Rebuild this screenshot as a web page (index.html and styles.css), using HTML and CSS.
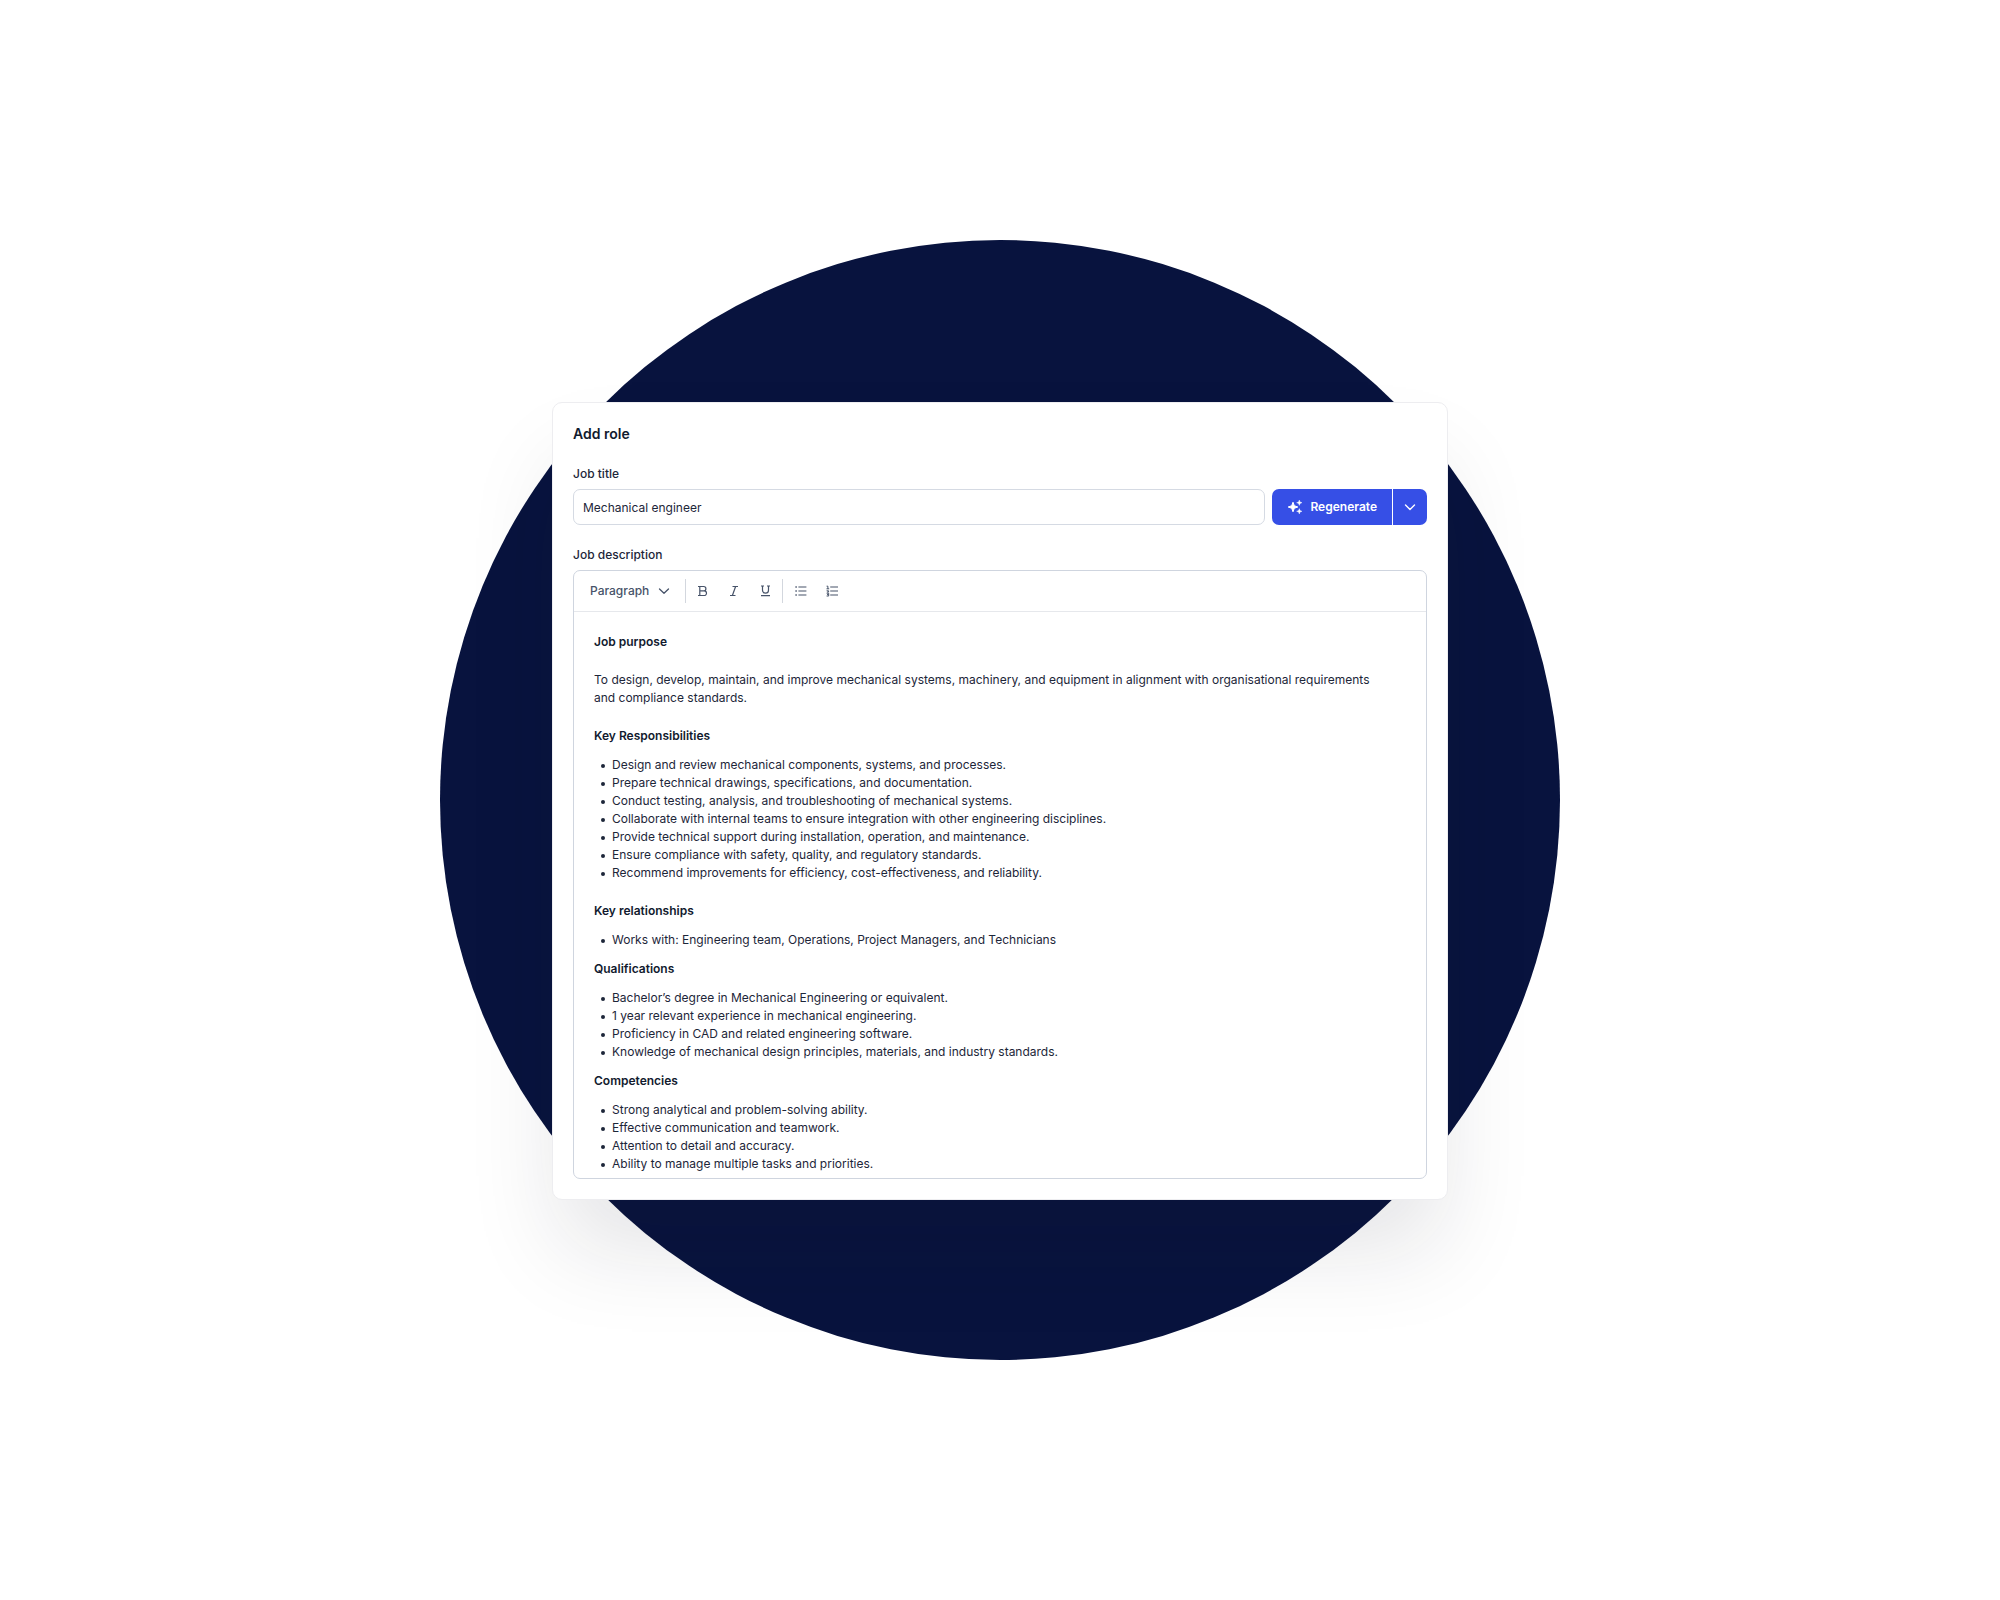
FILE: index.html
```html
<!DOCTYPE html>
<html lang="en">
<head>
  <meta charset="utf-8">
  <meta name="viewport" content="width=device-width, initial-scale=1">
  <title>Add role</title>
  <link rel="stylesheet" href="styles.css">
</head>
<body>
  <main class="stage">
    <div class="disc"></div>
    <form class="card">
      <h1 class="card-title">Add role</h1>

      <div class="field">
        <label class="label" for="job-title">Job title</label>
        <div class="title-row">
          <input class="text-input" id="job-title" type="text" value="Mechanical engineer">
          <div class="split-button">
            <button class="btn btn-main" type="button">
              <svg class="icon" viewBox="0 0 16 16" width="16" height="16" fill="currentColor" aria-hidden="true">
                <path d="M6 3.2 7.3 6.7 10.8 8 7.3 9.3 6 12.8 4.7 9.3 1.2 8 4.7 6.7Z" stroke="currentColor" stroke-width="1" stroke-linejoin="round"/>
                <path d="M12.3 1 13 3 15 3.7 13 4.4 12.3 6.4 11.6 4.4 9.6 3.7 11.6 3Z" stroke="currentColor" stroke-width=".4"/>
                <path d="M12.3 9.6 13 11.6 15 12.3 13 13 12.3 15 11.6 13 9.6 12.3 11.6 11.6Z" stroke="currentColor" stroke-width=".4"/>
              </svg>
              Regenerate
            </button>
            <button class="btn btn-more" type="button" aria-label="More options">
              <svg class="icon" viewBox="0 0 16 16" width="16" height="16" fill="none" stroke="currentColor" stroke-width="1.4" stroke-linecap="round" stroke-linejoin="round" aria-hidden="true"><path d="M3.5 6 8 10.5 12.5 6"/></svg>
            </button>
          </div>
        </div>
      </div>

      <div class="field">
        <span class="label" id="desc-label">Job description</span>
        <div class="editor">
          <div class="toolbar" role="toolbar" aria-label="Formatting">
            <div class="style-picker">
              <select class="style-select" aria-label="Text style">
                <option>Paragraph</option>
              </select>
              <svg class="style-chevron" viewBox="0 0 16 16" width="16" height="16" fill="none" stroke="currentColor" stroke-width="1.3" stroke-linecap="round" stroke-linejoin="round" aria-hidden="true"><path d="M3.5 6 8 10.3 12.5 6"/></svg>
            </div>
            <span class="divider"></span>
            <button class="tool" type="button" aria-label="Bold">
              <svg viewBox="0 0 16 16" width="16" height="16" fill="none" stroke="currentColor" stroke-width="1.2" aria-hidden="true"><path d="M3 3.5H8.7A2.2 2.2 0 0 1 8.7 7.9H4.8M8.7 7.9H9.2A2.3 2.3 0 0 1 9.2 12.5H3M4.8 3.5V12.5"/></svg>
            </button>
            <button class="tool" type="button" aria-label="Italic">
              <svg viewBox="0 0 16 16" width="16" height="16" fill="none" stroke="currentColor" stroke-width="1.2" aria-hidden="true"><path d="M6.5 3.5H12M4 12.5H9.5M9.6 3.5 6.4 12.5"/></svg>
            </button>
            <button class="tool" type="button" aria-label="Underline">
              <svg viewBox="0 0 16 16" width="16" height="16" fill="none" stroke="currentColor" stroke-width="1.2" aria-hidden="true"><path d="M4 3H7M10 3H13M5.5 3V7.2A3 3 0 0 0 11.5 7.2V3M4 12.7H13"/></svg>
            </button>
            <span class="divider"></span>
            <button class="tool" type="button" aria-label="Bulleted list">
              <svg viewBox="0 0 16 16" width="16" height="16" fill="none" stroke="currentColor" stroke-width="1.2" aria-hidden="true"><path d="M6.4 4H14.4M6.4 8H14.4M6.4 12H14.4"/><path d="M3.4 4H4.8M3.4 8H4.8M3.4 12H4.8" stroke-width="1.4"/></svg>
            </button>
            <button class="tool" type="button" aria-label="Numbered list">
              <svg viewBox="0 0 16 16" width="16" height="16" fill="none" stroke="currentColor" stroke-width="1.2" aria-hidden="true"><path d="M7.2 4H15M7.2 8H15M7.2 12H15"/><path d="M3.6 3.2H4.9V5.8M3.5 5.8H6.2M3.6 7.8H5.6V9H4M3.6 10.2H5.7V13H3.6M4 11.6H5.6" stroke-width="1"/></svg>
            </button>
          </div>
          <div class="document" role="textbox" aria-multiline="true" aria-labelledby="desc-label" contenteditable="true" spellcheck="false">
            <h2>Job purpose</h2>
            <p>To design, develop, maintain, and improve mechanical systems, machinery, and equipment in alignment with organisational requirements and compliance standards.</p>
            <h2>Key Responsibilities</h2>
            <ul class="spaced">
              <li>Design and review mechanical components, systems, and processes.</li>
              <li>Prepare technical drawings, specifications, and documentation.</li>
              <li>Conduct testing, analysis, and troubleshooting of mechanical systems.</li>
              <li>Collaborate with internal teams to ensure integration with other engineering disciplines.</li>
              <li>Provide technical support during installation, operation, and maintenance.</li>
              <li>Ensure compliance with safety, quality, and regulatory standards.</li>
              <li>Recommend improvements for efficiency, cost-effectiveness, and reliability.</li>
            </ul>
            <h2>Key relationships</h2>
            <ul>
              <li>Works with: Engineering team, Operations, Project Managers, and Technicians</li>
            </ul>
            <h2>Qualifications</h2>
            <ul>
              <li>Bachelor’s degree in Mechanical Engineering or equivalent.</li>
              <li>1 year relevant experience in mechanical engineering.</li>
              <li>Proficiency in CAD and related engineering software.</li>
              <li>Knowledge of mechanical design principles, materials, and industry standards.</li>
            </ul>
            <h2>Competencies</h2>
            <ul>
              <li>Strong analytical and problem-solving ability.</li>
              <li>Effective communication and teamwork.</li>
              <li>Attention to detail and accuracy.</li>
              <li>Ability to manage multiple tasks and priorities.</li>
            </ul>
          </div>
        </div>
      </div>
    </form>
  </main>
</body>
</html>
```

FILE: styles.css
```css
* {
  box-sizing: border-box;
}

body {
  margin: 0;
  background: #fff;
  color: #1d2639;
  font-family: Inter, "Liberation Sans", sans-serif;
  font-size: 12px;
  line-height: 18px;
}

button,
input,
select {
  margin: 0;
  font: inherit;
  color: inherit;
}

/* The disc and the card share one grid cell */
.stage {
  display: grid;
  min-height: 100vh;
  place-content: center;
  justify-items: center;
}

.stage > * {
  grid-area: 1 / 1;
}

.disc {
  width: 56vw;
  aspect-ratio: 1;
  border-radius: 50%;
  background: #08133e;
}

.card {
  display: flex;
  flex-direction: column;
  gap: 21px;
  align-self: start;
  width: 80%;
  margin-top: 162px;
  padding: 20px;
  border: 1px solid #ededf0;
  border-radius: 10px;
  background: #fff;
  box-shadow: 0 56px 90px -10px rgba(24, 24, 40, 0.12);
}

.card-title {
  margin: 0;
  color: #111a2e;
  font-size: 14px;
  font-weight: 600;
  line-height: 21px;
}

.field {
  display: flex;
  flex-direction: column;
  gap: 6px;
}

.label {
  font-weight: 500;
}

.title-row {
  display: flex;
  gap: 7px;
}

.text-input {
  flex: 1;
  min-width: 0;
  height: 36px;
  padding: 0 9px;
  border: 1px solid #d5dae3;
  border-radius: 7px;
  background: #fff;
}

.split-button {
  display: flex;
  gap: 1px;
}

.btn {
  display: flex;
  align-items: center;
  justify-content: center;
  height: 36px;
  border: 0;
  background: #364fe6;
  color: #fff;
  font-weight: 600;
}

.btn-main {
  gap: 7px;
  padding: 0 15px;
  border-radius: 7px 0 0 7px;
}

.btn-more {
  width: 34px;
  padding: 0;
  border-radius: 0 7px 7px 0;
}

.editor {
  border: 1px solid #cfd5df;
  border-radius: 7px;
}

.toolbar {
  display: flex;
  align-items: center;
  gap: 3px;
  height: 41px;
  padding-left: 16px;
  border-bottom: 1px solid #e6e8ec;
  color: #475369;
}

.style-picker {
  display: grid;
  align-items: center;
  width: 92px;
}

.style-select,
.style-chevron {
  grid-area: 1 / 1;
}

.style-select {
  height: 28px;
  padding: 0;
  border: 0;
  appearance: none;
  background: none;
  font-weight: 500;
}

.style-chevron {
  justify-self: end;
  margin-right: 10px;
  pointer-events: none;
}

.divider {
  width: 1px;
  height: 24px;
  background: #d3d7de;
}

.tool {
  display: grid;
  place-items: center;
  width: 28px;
  height: 28px;
  padding: 0;
  border: 0;
  background: none;
}

.document {
  padding: 21px 32px 5px 20px;
}

.document h2 {
  margin: 0 0 11px;
  color: #111a2e;
  font-size: 12px;
  font-weight: 600;
  line-height: 18px;
}

.document p {
  margin: 20px 0;
}

.document ul {
  margin: 0 0 11px;
  padding-left: 7px;
  list-style: none;
}

.document li {
  display: flex;
  gap: 7px;
}

.document li::before {
  content: "";
  flex: none;
  width: 4px;
  height: 4px;
  margin-top: 8px;
  border-radius: 50%;
  background: currentColor;
}

.document .spaced {
  margin-bottom: 20px;
}

.document ul:last-child {
  margin-bottom: 0;
}
```
